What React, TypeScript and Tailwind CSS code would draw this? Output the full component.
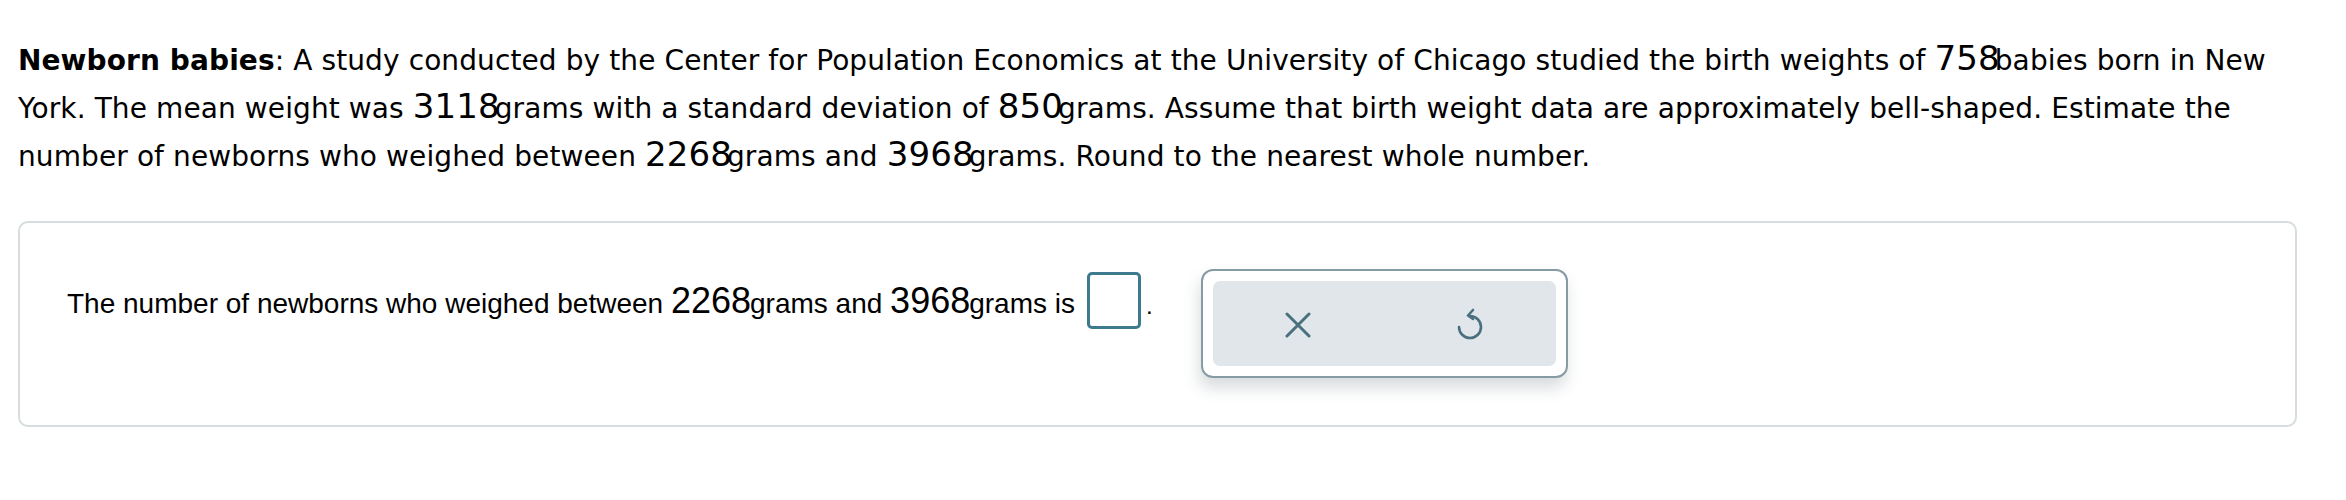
export default function App() {
  const num = "font-['DejaVu_Sans',sans-serif] text-[34px] leading-none mr-[-5px]";
  const ansNum = "font-['Liberation_Sans',Arial,sans-serif] text-[36px] leading-none mr-[-1px]";
  return (
    <div className="w-[2346px] h-[500px] bg-white px-[18px] pt-[37px] text-black">
      <p className="font-['DejaVu_Sans',Verdana,sans-serif] text-[28px] leading-[48px] tracking-[0.1px] whitespace-nowrap">
        <strong className="font-bold">Newborn babies</strong>: A study conducted by the Center for Population
        Economics at the University of Chicago studied the birth weights of <span className={num}>758</span>babies
        born in New
        <br />
        York. The mean weight was <span className={num}>3118</span>grams with a standard deviation of{" "}
        <span className={num}>850</span>grams. Assume that birth weight data are approximately bell-shaped. Estimate
        the
        <br />
        number of newborns who weighed between <span className={num}>2268</span>grams and{" "}
        <span className={num}>3968</span>grams. Round to the nearest whole number.
      </p>

      <div className="mt-[40px] w-[2279px] h-[206px] rounded-[10px] border-2 border-[#d6dcdf] pl-[47px] pt-[46px] flex items-start">
        <div className="flex items-center h-[57px] mt-[3px]">
          <span className="flex items-baseline font-['Liberation_Sans',Arial,sans-serif] text-[28px] leading-[34px] pt-[3px]">
            <span>The number of newborns who weighed between&nbsp;</span>
            <span className={ansNum}>2268</span>
            <span>grams and&nbsp;</span>
            <span className={ansNum}>3968</span>
            <span>grams is</span>
          </span>
          <span className="ml-[12px] inline-block w-[54px] h-[57px] rounded-[5px] border-[3px] border-[#3d7a8d]" />
          <span className="ml-[5px] pt-[10px] font-['Liberation_Sans',Arial,sans-serif] text-[24px]">.</span>
        </div>

        <div className="ml-[48px] w-[367px] h-[109px] rounded-[12px] border-2 border-[#879ba5] bg-white p-[10px] shadow-[-2px_10px_16px_rgba(60,80,90,0.2)]">
          <div className="flex h-full rounded-[7px] bg-[#e0e6e9]">
            <button className="flex flex-1 items-center justify-center pt-[2px]">
              <svg width="26" height="26" viewBox="0 0 26 26" fill="none" stroke="#4a6f7e" strokeWidth="3" strokeLinecap="round">
                <path d="M2 2 L24 24 M24 2 L2 24" />
              </svg>
            </button>
            <button className="flex flex-1 items-center justify-center pt-[2px]">
              <svg width="28" height="34" viewBox="0 0 28 34" fill="none" stroke="#4a6f7e" strokeWidth="2.6" strokeLinecap="round" strokeLinejoin="round">
                <path d="M14 8 A11 11 0 1 1 3 19" />
                <path d="M17 2 L12 7.5 L17 11" />
              </svg>
            </button>
          </div>
        </div>
      </div>
    </div>
  );
}
